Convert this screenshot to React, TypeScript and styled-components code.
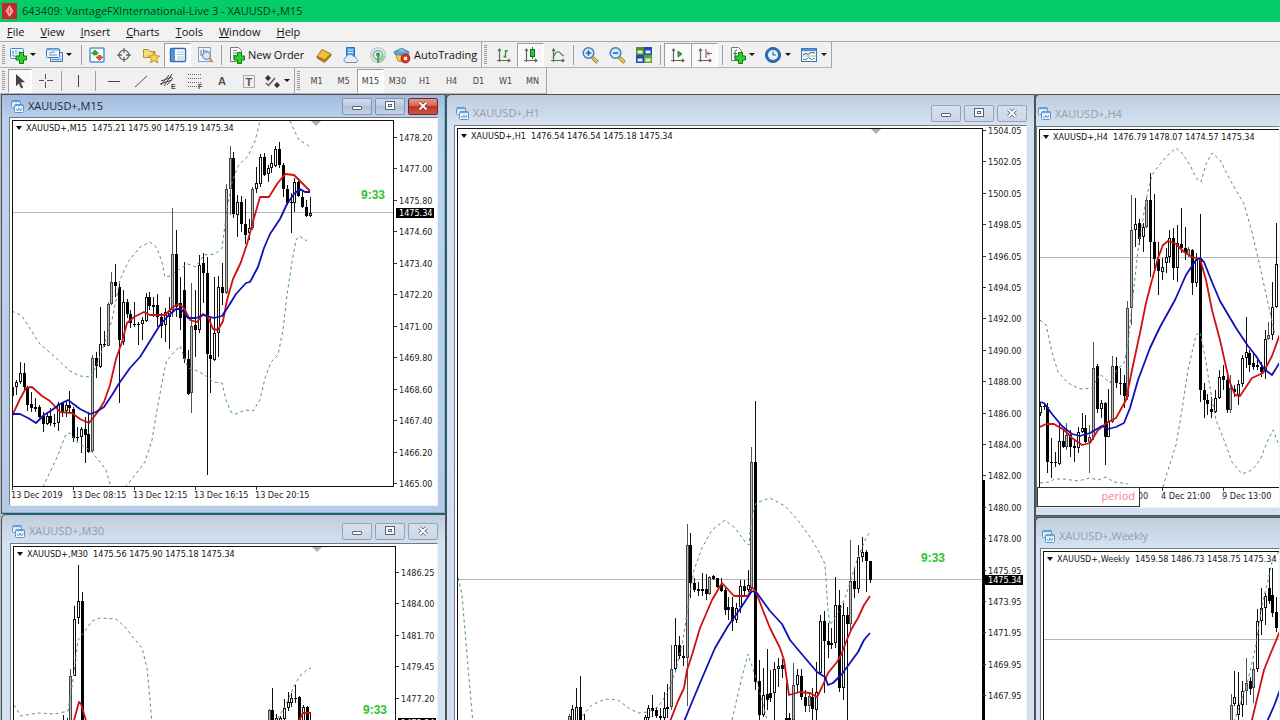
import React from "react";
import styled, { createGlobalStyle, css } from "styled-components";

const uiFont = `"Open Sans", "Noto Sans", sans-serif`;
const chartFont = `"DejaVu Sans Condensed", "DejaVu Sans", sans-serif`;

const GlobalStyle = createGlobalStyle`
  * { box-sizing: border-box; }
  html, body, #root { height: 100%; margin: 0; }
  body { background: #f0f0f0; color: #111; font: 11px/16px ${uiFont}; overflow: hidden; }
  button { font: inherit; color: inherit; border: 0; padding: 0; background: none; }
`;

/* ---------- application chrome ---------- */

const Shell = styled.div`
  display: flex;
  flex-direction: column;
  height: 100vh;
`;

const AppTitle = styled.header`
  display: flex;
  flex: none;
  align-items: center;
  gap: 5px;
  height: 22px;
  padding-left: 2px;
  background: #04cd67;
  color: #063a20;
  white-space: nowrap;
`;

const MenuBar = styled.nav`
  display: flex;
  flex: none;
  align-items: center;
  gap: 16px;
  height: 20px;
  padding-left: 7px;
  background: #f3f2f3;
  border-bottom: 1px solid #a9a9a9;
`;

const MenuItem = styled.button`
  line-height: 18px;
  &::first-letter { text-decoration: underline; }
`;

const ToolRow = styled.div`
  display: flex;
  flex: none;
  height: 26px;
  background: #f0f0f0;
`;

const ToolGroup = styled.div<{ $tight?: boolean }>`
  display: flex;
  align-items: center;
  height: 26px;
  padding-right: ${(p) => (p.$tight ? 0 : 4)}px;
  border-right: 1px solid #a5a5a5;
  border-bottom: 1px solid #b4b4b4;
`;

const Grip = styled.span`
  width: 3px;
  height: 20px;
  margin: 0 3px 0 2px;
  background: repeating-linear-gradient(#9a9a9a 0 1px, #f0f0f0 1px 2px);
`;

const Divider = styled.span<{ $gap?: number }>`
  width: 1px;
  height: 20px;
  margin: 0 ${(p) => p.$gap ?? 2}px;
  background: #a0a0a0;
`;

const buttonWidths = { icon: 27, slim: 24, split: 36, tail: 32, label: 85 };

const ToolButton = styled.button<{ $pressed?: boolean; $size?: keyof typeof buttonWidths }>`
  display: flex;
  align-items: center;
  justify-content: center;
  gap: 3px;
  height: 24px;
  min-width: ${(p) => buttonWidths[p.$size ?? "icon"]}px;
  white-space: nowrap;
  ${(p) =>
    (p.$size === "split" || p.$size === "tail") &&
    css`
      justify-content: flex-start;
      padding-left: 1px;
    `}
  ${(p) =>
    p.$size === "label" &&
    css`
      justify-content: flex-start;
      padding-left: 2px;
    `}
  ${(p) =>
    p.$pressed &&
    css`
      background: #f9f9f9;
      border: 1px solid;
      border-color: #9c9c9c #fff #fff #9c9c9c;
    `}
`;

const PeriodButton = styled(ToolButton)`
  font: 9px/12px ${chartFont};
  color: #444;
`;

const Caret = styled.span`
  border: 3px solid transparent;
  border-top-color: #111;
  border-bottom: 0;
`;

/* ---------- chart windows ---------- */

const Desktop = styled.main`
  display: grid;
  flex: 1;
  min-height: 0;
  grid-template-columns: minmax(446px, 34fr) minmax(589px, 46fr) minmax(0, 20fr);
  background: #6b6b6b;
  overflow: hidden;
`;

const Column = styled.div`
  display: flex;
  flex-direction: column;
  gap: 1px;
  min-width: 0;
  min-height: 0;
`;

const LeftColumn = styled(Column)`
  gap: 0;
  padding-left: 1px;
  background: #b9bcc0;
`;

const Frame = styled.section<{ $active?: boolean; $left: number; $fill?: boolean; $open?: boolean }>`
  display: flex;
  flex-direction: column;
  flex: ${(p) => (p.$fill ? "1 0 auto" : "none")};
  padding: 0 ${(p) => (p.$open ? 0 : 7)}px 7px ${(p) => p.$left}px;
  border: 1px solid #4b4f56;
  border-right-width: ${(p) => (p.$open ? 0 : 1)}px;
  border-radius: 5px 0 0 0;
  background: ${(p) =>
    p.$active
      ? "linear-gradient(#a3bbdc, #b9d0ee 24px, #bcd2ee 90px, #b7cbe6)"
      : "linear-gradient(#c0cddd, #d5e2f2 30px, #d4e0f1)"};
  ${(p) =>
    p.$active &&
    css`
      border-radius: 0;
      box-shadow: inset -1px -1px 0 #49cdec;
    `}
`;

const TitleBar = styled.header<{ $height: number; $drop: number; $active?: boolean }>`
  display: flex;
  flex: none;
  align-items: center;
  gap: 4px;
  height: ${(p) => p.$height}px;
  padding: ${(p) => p.$drop}px 0 0 2px;
  color: ${(p) => (p.$active ? "#1c2838" : "#939dab")};
`;

const WindowName = styled.h2`
  flex: 1;
  margin: 0;
  font-size: 11px;
  font-weight: 400;
`;

const Controls = styled.div`
  display: flex;
  gap: 3px;
`;

const ControlButton = styled.button<{ $danger?: boolean }>`
  display: flex;
  align-items: center;
  justify-content: center;
  width: 30px;
  height: 17px;
  border: 1px solid #8593ab;
  border-radius: 2px;
  background: linear-gradient(#d0dcec, #bccbe0 50%, #aec0da 50%, #c4d3e8);
  ${(p) =>
    p.$danger &&
    css`
      border-color: #6e2a26;
      background: linear-gradient(#e2998d, #d0604f 50%, #bd3524 50%, #cf5340);
    `}
`;

const IdleControl = styled(ControlButton)`
  background: linear-gradient(#d6e0ee, #cbd7e7);
  border-color: #95a2b8;
`;

const Client = styled.div`
  display: grid;
  flex: 1;
  grid-template-columns: minmax(0, 1fr) auto;
  grid-template-rows: auto 1fr;
  padding: 2px 0 0 2px;
  border: 1px solid #75787d;
  border-right-color: #eef3fa;
  border-bottom-color: #eef3fa;
  background: #fff;
`;

const Plot = styled.div<{ $height: number; $open?: boolean }>`
  position: relative;
  height: ${(p) => p.$height}px;
  border: 1px solid #111;
  border-right-width: ${(p) => (p.$open ? 0 : 1)}px;
  overflow: hidden;
`;

const PlotSvg = styled.svg`
  display: block;
  width: 100%;
  height: 100%;
`;

const Quote = styled.div`
  position: absolute;
  top: 1px;
  left: 3px;
  display: flex;
  align-items: center;
  gap: 4px;
  font: 9px/12px ${chartFont};
  white-space: pre;
`;

const QuoteCaret = styled(Caret)`
  border-top-width: 4px;
`;

const Countdown = styled.div<{ $top: number; $right: number }>`
  position: absolute;
  top: ${(p) => p.$top}px;
  right: ${(p) => p.$right}px;
  color: #2fc42f;
  font: 700 12px/16px "Liberation Sans", Arial, sans-serif;
`;

const Scale = styled.svg<{ $width: number }>`
  display: block;
  width: ${(p) => p.$width}px;
  overflow: visible;
  font: 9px ${chartFont};
`;

const TimeAxis = styled.svg<{ $height: number }>`
  display: block;
  grid-column: 1 / -1;
  width: 100%;
  height: ${(p) => p.$height}px;
  font: 9px ${chartFont};
`;

const TimeArea = styled.div`
  position: relative;
  grid-column: 1 / -1;
`;

const PeriodTag = styled.div`
  position: absolute;
  top: -1px;
  left: -2px;
  width: 103px;
  height: 20px;
  padding-right: 4px;
  border: 1px solid #333;
  background: #fff;
  color: #ee8494;
  font: 11px/16px ${uiFont};
  text-align: right;
`;

/* ---------- chart data: high, body top, body bottom, low, kind ---------- */

type Kind = 0 | 1 | 2; // falling, rising, rising over grey
type Candle = [number, number, number, number, Kind];
type Pt = [number, number];

interface Series {
  start: number;
  candles: Candle[];
}

interface ChartData {
  origin: Pt;
  level: number;
  marker?: number;
  series: Series[];
  bands: Pt[][];
  fast: Pt[][];
  slow: Pt[][];
}

const STEP = 61 / 16;

const m15: ChartData = {
  origin: [13, 121],
  level: 213,
  marker: 316,
  series: [
    {
      start: 12.7,
      candles: [
        [379, 387, 396, 396, 1], [380, 382, 387, 395, 1], [362, 373, 382, 384, 1], [363, 373, 387, 391, 0],
        [386, 388, 405, 411, 0], [392, 404, 408, 412, 0], [398, 407, 409, 412, 0], [405, 407, 417, 418, 0],
        [412, 416, 424, 432, 0], [412, 416, 424, 425, 1], [408, 416, 423, 426, 0], [414, 423, 424, 427, 0],
        [402, 404, 423, 431, 1], [402, 403, 413, 417, 0], [400, 405, 411, 417, 1], [391, 405, 408, 413, 0],
        [407, 409, 438, 442, 0], [427, 437, 438, 441, 0], [427, 429, 437, 453, 1], [417, 429, 435, 463, 0],
        [412, 434, 452, 453, 0], [355, 358, 451, 452, 2], [352, 358, 366, 378, 0], [307, 344, 367, 368, 1],
        [331, 344, 345, 347, 0], [302, 304, 346, 346, 2], [272, 282, 304, 305, 2], [264, 282, 286, 297, 0],
        [281, 287, 340, 403, 0], [290, 302, 342, 345, 1], [299, 302, 314, 318, 0], [310, 314, 323, 328, 0],
        [302, 324, 325, 327, 0], [322, 324, 325, 345, 0], [317, 320, 324, 340, 1], [293, 297, 321, 322, 1],
        [292, 297, 306, 310, 0], [297, 305, 307, 317, 0], [294, 305, 317, 327, 0], [313, 317, 326, 338, 0],
        [308, 312, 325, 342, 1], [297, 311, 317, 349, 1], [208, 254, 310, 317, 2], [230, 254, 307, 317, 0],
        [277, 303, 318, 330, 0], [262, 290, 359, 363, 0], [350, 359, 394, 395, 0], [283, 326, 393, 413, 2],
        [290, 325, 330, 357, 0], [255, 265, 330, 333, 1], [253, 263, 273, 303, 0], [257, 273, 354, 475, 0],
        [317, 355, 359, 393, 0], [277, 333, 360, 361, 1], [276, 287, 333, 357, 1], [263, 287, 293, 305, 0],
        [184, 189, 293, 294, 2], [146, 158, 189, 215, 2], [152, 158, 214, 218, 0], [195, 202, 215, 237, 1],
        [196, 202, 224, 232, 0], [199, 224, 235, 244, 0], [219, 228, 233, 240, 1], [187, 189, 228, 230, 2],
        [167, 183, 189, 193, 1], [154, 157, 184, 187, 1], [153, 157, 175, 176, 0], [165, 168, 174, 182, 1],
        [155, 163, 168, 173, 1], [146, 149, 166, 167, 1], [142, 149, 165, 168, 0], [163, 165, 189, 197, 0],
        [185, 189, 203, 205, 0], [193, 202, 203, 233, 0], [178, 182, 203, 212, 1], [178, 182, 196, 197, 0],
        [190, 197, 207, 208, 0], [200, 207, 216, 217, 0], [197, 213, 216, 217, 1],
      ],
    },
  ],
  bands: [
    [[12, 311], [22, 316], [40, 344], [55, 357], [70, 371], [80, 376], [90, 377], [96, 367], [104, 345], [112, 320], [120, 280], [128, 262], [140, 247], [150, 242], [157, 248], [162, 262], [165, 277], [170, 276], [178, 270], [188, 264], [196, 267], [204, 255], [215, 254], [222, 248], [227, 210], [232, 182], [238, 166], [248, 156], [255, 141], [260, 121]],
    [[290, 121], [294, 130], [299, 140], [304, 143], [309, 146]],
    [[43, 487], [50, 472], [58, 455], [66, 434], [70, 433], [78, 443], [90, 450], [100, 462], [106, 470], [111, 487]],
    [[125, 487], [135, 475], [145, 462], [152, 440], [157, 410], [164, 372], [167, 360], [180, 346], [188, 368], [195, 370], [205, 375], [213, 382], [222, 383], [226, 400], [231, 412], [236, 414], [245, 410], [253, 411], [260, 400], [265, 378], [271, 362], [278, 355], [283, 330], [287, 295], [292, 262], [296, 240], [299, 236], [307, 241]],
  ],
  fast: [
    [[12, 416], [20, 399], [26, 388], [32, 387], [42, 396], [50, 401], [60, 412], [72, 413], [80, 419], [89, 423], [97, 413], [104, 402], [110, 385], [116, 359], [122, 342], [127, 323], [134, 317], [144, 312], [150, 315], [165, 315], [172, 308], [178, 304], [184, 308], [190, 320], [197, 322], [203, 314], [208, 317], [213, 329], [218, 330], [223, 321], [227, 300], [233, 279], [241, 262], [247, 244], [254, 218], [260, 197], [269, 197], [277, 184], [285, 174], [294, 175], [302, 183], [310, 191]],
  ],
  slow: [
    [[12, 414], [20, 414], [28, 418], [36, 423], [44, 415], [52, 410], [60, 404], [68, 400], [80, 409], [90, 414], [96, 412], [104, 407], [112, 395], [120, 382], [130, 368], [140, 357], [150, 341], [160, 325], [168, 316], [176, 309], [181, 309], [188, 318], [196, 318], [203, 315], [214, 318], [222, 316], [228, 307], [236, 294], [246, 283], [250, 282], [258, 267], [264, 248], [270, 234], [280, 219], [287, 204], [294, 194], [300, 189], [305, 192], [310, 192]],
  ],
};

const m30: ChartData = {
  origin: [14, 547],
  level: 723,
  marker: 317,
  series: [
    {
      start: 63.2,
      candles: [
        [715, 724, 730, 740, 0], [718, 724, 730, 740, 0], [669, 676, 740, 740, 2], [606, 619, 676, 676, 1],
        [565, 601, 618, 624, 1], [592, 601, 740, 740, 0],
      ],
    },
    {
      start: 269,
      candles: [
        [709, 710, 740, 740, 2], [688, 710, 740, 740, 0], [714, 718, 730, 740, 1], [716, 718, 740, 740, 1],
        [699, 708, 719, 722, 1], [692, 702, 708, 711, 1], [693, 698, 703, 707, 1], [685, 698, 699, 703, 0],
        [696, 697, 740, 740, 0], [705, 707, 725, 730, 1], [706, 707, 730, 730, 0], [714, 720, 730, 730, 1],
      ],
    },
  ],
  bands: [
    [[14, 705], [21, 716], [38, 713], [55, 714], [68, 711], [73, 680], [78, 640], [84, 632], [92, 621], [100, 618], [116, 619], [125, 627], [132, 636], [142, 648], [147, 668], [150, 700], [152, 724]],
    [[275, 724], [288, 700], [294, 686], [300, 676], [308, 669], [311, 668]],
  ],
  fast: [[[73, 724], [79, 702], [81, 704], [87, 724]], [[297, 724], [303, 713], [311, 713]]],
  slow: [],
};

const h1: ChartData = {
  origin: [458, 129],
  level: 580,
  marker: 876,
  series: [
    { start: 569, candles: [[714, 716, 740, 740, 2], [705, 709, 740, 740, 1], [688, 707, 740, 740, 1], [676, 707, 740, 740, 0], [714, 722, 740, 740, 0]] },
    {
      start: 645.1,
      candles: [
        [715, 717, 722, 722, 1], [705, 708, 718, 720, 1], [695, 708, 711, 717, 0], [707, 710, 716, 718, 0],
        [708, 716, 718, 720, 0], [692, 708, 718, 722, 1], [684, 707, 709, 718, 0], [645, 669, 707, 710, 2],
        [618, 645, 669, 670, 1], [636, 645, 656, 659, 0], [645, 656, 658, 666, 0], [524, 545, 658, 706, 2],
        [533, 545, 583, 598, 0], [578, 583, 590, 592, 0], [582, 589, 591, 596, 0], [573, 589, 591, 596, 0],
        [574, 589, 594, 600, 0], [576, 577, 594, 595, 2], [575, 576, 579, 580, 0], [578, 578, 587, 588, 0],
        [578, 585, 591, 592, 0], [587, 590, 610, 615, 0], [597, 607, 610, 620, 0], [597, 607, 621, 631, 0],
        [603, 608, 620, 623, 1], [580, 586, 607, 613, 1], [580, 586, 591, 595, 0], [570, 585, 590, 592, 1],
        [447, 462, 588, 590, 2], [401, 462, 682, 690, 0], [660, 681, 715, 720, 0], [668, 695, 715, 717, 1],
        [649, 694, 700, 710, 0], [670, 693, 698, 702, 0], [662, 669, 693, 720, 1], [658, 666, 669, 687, 1],
        [659, 665, 669, 678, 0], [683, 718, 724, 724, 0], [713, 718, 724, 724, 0], [663, 685, 720, 724, 2],
        [669, 675, 685, 692, 1], [669, 676, 697, 700, 0], [690, 697, 706, 712, 0], [692, 696, 706, 712, 2],
        [688, 697, 709, 724, 0], [662, 692, 710, 724, 1], [615, 621, 673, 674, 1], [611, 621, 641, 693, 0],
        [623, 641, 645, 658, 0], [628, 643, 645, 649, 0], [577, 605, 643, 648, 1], [590, 605, 688, 692, 0],
        [603, 615, 688, 700, 1], [607, 615, 624, 724, 0], [540, 581, 624, 630, 2], [568, 581, 589, 598, 0],
        [545, 557, 589, 593, 1], [537, 552, 557, 562, 1], [550, 552, 561, 592, 0], [561, 561, 580, 583, 0],
      ],
    },
  ],
  bands: [
    [[457, 572], [462, 595], [467, 655], [473, 724]],
    [[582, 716], [592, 705], [605, 699], [618, 700], [630, 709], [638, 713], [648, 712], [658, 707], [668, 692], [676, 670], [683, 640], [689, 600], [694, 570], [702, 548], [712, 530], [725, 520], [735, 528], [746, 543], [749, 545], [751, 520], [756, 503], [770, 498], [785, 506], [797, 519], [808, 534], [818, 550], [825, 564], [828, 610], [830, 625], [840, 610], [847, 592], [857, 560], [866, 538], [870, 532]],
    [[732, 720], [740, 685], [748, 654], [755, 675], [762, 700], [768, 724]],
  ],
  fast: [
    [[669, 724], [678, 701], [684, 688], [687, 670], [692, 655], [700, 628], [712, 600], [722, 583], [734, 596], [748, 596], [752, 587], [756, 592], [762, 608], [770, 628], [780, 648], [784, 660], [789, 695], [800, 692], [810, 693], [817, 697], [822, 687], [828, 673], [837, 662], [841, 655], [846, 642], [852, 628], [858, 618], [864, 605], [870, 596]],
  ],
  slow: [
    [[683, 724], [690, 707], [700, 683], [715, 648], [728, 626], [738, 612], [748, 597], [752, 591], [757, 593], [770, 611], [782, 624], [790, 640], [800, 652], [817, 672], [825, 677], [828, 685], [833, 683], [842, 674], [850, 663], [858, 652], [864, 640], [870, 633]],
  ],
};

const h4: ChartData = {
  origin: [1040, 130],
  level: 258,
  series: [
    {
      start: 1040.2,
      candles: [
        [403, 406, 413, 416, 1], [404, 406, 407, 410, 0], [403, 407, 462, 473, 0], [438, 462, 463, 478, 0],
        [452, 462, 463, 467, 0], [423, 441, 464, 465, 1], [430, 441, 447, 448, 0], [423, 435, 447, 450, 2],
        [430, 435, 447, 457, 0], [440, 446, 448, 462, 0], [427, 432, 448, 453, 1], [413, 428, 432, 433, 1],
        [415, 428, 442, 443, 0], [425, 437, 442, 473, 2], [342, 368, 437, 440, 2], [364, 366, 409, 413, 0],
        [400, 403, 409, 418, 1], [402, 403, 437, 465, 0], [389, 422, 437, 437, 1], [356, 366, 422, 423, 2],
        [357, 366, 383, 388, 0], [368, 383, 384, 395, 0], [375, 383, 396, 408, 0], [301, 308, 397, 400, 2],
        [195, 230, 308, 325, 2], [198, 224, 230, 247, 1], [219, 223, 239, 245, 0], [223, 227, 237, 252, 1],
        [197, 200, 227, 228, 2], [173, 200, 242, 277, 0], [194, 242, 259, 270, 0], [242, 259, 271, 295, 0],
        [258, 267, 272, 280, 1], [248, 257, 263, 273, 1], [230, 238, 257, 263, 1], [228, 238, 268, 280, 0],
        [225, 243, 268, 282, 1], [208, 244, 248, 253, 0], [227, 248, 253, 260, 0], [247, 249, 255, 257, 2],
        [249, 250, 283, 295, 0], [253, 260, 283, 287, 1], [214, 258, 390, 402, 0], [383, 390, 400, 418, 0],
        [394, 400, 404, 415, 0], [397, 409, 412, 418, 0], [390, 398, 412, 413, 1], [370, 377, 398, 399, 1],
        [365, 376, 380, 390, 0], [375, 380, 410, 413, 0], [375, 388, 410, 413, 2], [385, 389, 392, 397, 0],
        [380, 384, 395, 405, 1], [355, 358, 384, 387, 1], [317, 352, 358, 368, 1], [350, 353, 365, 372, 0],
        [352, 363, 367, 370, 0], [360, 365, 367, 370, 0], [362, 367, 372, 377, 0], [330, 339, 372, 379, 1],
        [322, 335, 339, 340, 2], [282, 307, 335, 340, 1], [223, 264, 307, 308, 1], [240, 255, 264, 270, 0],
      ],
    },
  ],
  bands: [
    [[1040, 320], [1046, 325], [1052, 352], [1058, 372], [1068, 383], [1080, 389], [1092, 388], [1100, 374], [1110, 383], [1116, 371], [1124, 363], [1128, 345], [1132, 305], [1138, 250], [1146, 200], [1152, 175], [1160, 164], [1168, 155], [1176, 148], [1182, 153], [1190, 165], [1196, 178], [1201, 182], [1206, 164], [1212, 153], [1220, 160], [1230, 180], [1236, 190], [1244, 204], [1252, 232], [1258, 258], [1264, 285], [1270, 312], [1275, 335]],
    [[1040, 483], [1050, 482], [1054, 479], [1064, 479], [1078, 481], [1090, 478], [1098, 480], [1106, 477], [1114, 482], [1122, 483], [1128, 484]],
    [[1163, 487], [1168, 470], [1176, 445], [1182, 410], [1188, 370], [1196, 335], [1200, 332], [1206, 362], [1212, 400], [1216, 420], [1224, 440], [1232, 462], [1242, 474], [1252, 470], [1260, 460], [1268, 440], [1273, 430], [1280, 448]],
  ],
  fast: [
    [[1040, 427], [1046, 424], [1054, 424], [1064, 430], [1072, 438], [1082, 445], [1090, 443], [1098, 430], [1108, 422], [1116, 418], [1126, 400], [1132, 370], [1140, 333], [1146, 303], [1152, 280], [1158, 258], [1163, 245], [1168, 241], [1176, 244], [1184, 252], [1192, 257], [1200, 259], [1206, 280], [1212, 310], [1220, 340], [1229, 380], [1235, 395], [1240, 396], [1252, 378], [1263, 373], [1272, 356], [1280, 334]],
  ],
  slow: [
    [[1040, 402], [1044, 403], [1052, 414], [1062, 426], [1072, 434], [1080, 436], [1090, 433], [1102, 426], [1108, 429], [1116, 427], [1124, 423], [1130, 408], [1138, 380], [1150, 348], [1160, 327], [1175, 300], [1186, 275], [1196, 260], [1200, 258], [1204, 262], [1212, 282], [1220, 301], [1236, 328], [1248, 346], [1256, 356], [1264, 369], [1272, 375], [1280, 362]],
  ],
};

const weekly: ChartData = {
  origin: [1044, 552],
  level: 640,
  series: [
    {
      start: 1231,
      candles: [
        [694, 705, 740, 740, 2], [671, 697, 704, 706, 1], [672, 705, 715, 724, 1], [681, 691, 705, 717, 1],
        [658, 683, 691, 705, 2], [677, 681, 689, 695, 0], [662, 669, 688, 703, 2], [609, 621, 669, 672, 1],
        [588, 608, 621, 635, 1], [593, 596, 608, 625, 1], [568, 588, 601, 604, 0], [568, 595, 613, 617, 0],
        [597, 612, 628, 632, 0], [600, 604, 612, 630, 0],
      ],
    },
  ],
  bands: [[[1234, 722], [1248, 680], [1256, 645], [1262, 605], [1268, 580], [1272, 562], [1280, 550]]],
  fast: [[[1251, 724], [1258, 695], [1264, 670], [1270, 655], [1280, 631]]],
  slow: [[[1266, 724], [1274, 706], [1280, 690]]],
};

const kindFill = ["#000", "#fff", "#bdbdbd"];

function CandleMark({ x, candle }: { x: number; candle: Candle }) {
  const [high, top, bottom, low, kind] = candle;
  const cx = Math.round(x);
  const bodyHeight = Math.max(1, bottom - top);
  return (
    <g>
      <rect x={cx} y={high} width={1} height={Math.max(1, low - high)} fill={kind === 2 ? "#555" : "#111"} />
      {kind === 0 || bodyHeight < 3 ? (
        <rect x={cx - 1} y={top} width={3} height={bodyHeight} fill="#000" />
      ) : (
        <rect x={cx - 0.5} y={top + 0.5} width={2} height={bodyHeight - 1} fill={kindFill[kind]} stroke={kind === 2 ? "#444" : "#111"} />
      )}
    </g>
  );
}

const toPoints = (line: Pt[]) => line.map((p) => p.join(",")).join(" ");

function PlotDrawing({ data }: { data: ChartData }) {
  const [ox, oy] = data.origin;
  const levelY = data.level - oy;
  return (
    <PlotSvg aria-hidden="true">
      <line x1="0" x2="100%" y1={levelY - 0.5} y2={levelY - 0.5} stroke="#b8b8b8" />
      <g transform={`translate(${-ox} ${-oy})`}>
        {data.marker && <path d={`M${data.marker - 5} ${oy}h10l-5 5z`} fill="#b0b0b0" />}
        {data.series.map((s) => s.candles.map((c, i) => <CandleMark key={`${s.start}-${i}`} x={s.start - 0.5 + i * STEP} candle={c} />))}
        <g fill="none" strokeLinejoin="round">
          {data.bands.map((b, i) => (
            <polyline key={i} points={toPoints(b)} stroke="#4f9580" strokeDasharray="3 3" />
          ))}
          {data.fast.map((b, i) => (
            <polyline key={i} points={toPoints(b)} stroke="#cf1010" strokeWidth="1.8" />
          ))}
          {data.slow.map((b, i) => (
            <polyline key={i} points={toPoints(b)} stroke="#1010b8" strokeWidth="1.8" />
          ))}
        </g>
      </g>
    </PlotSvg>
  );
}

interface ScaleProps {
  labels: string[];
  first: number;
  gap: number;
  current: number;
  heavyFrom?: number;
  width?: number;
}

function PriceScale({ labels, first, gap, current, heavyFrom, width = 43 }: ScaleProps) {
  return (
    <Scale height="100%" $width={width}>
      {heavyFrom && <rect x="-1" y={heavyFrom} width="3" height="100%" fill="#000" />}
      {labels.map((label, i) => {
        const y = Math.round(first + i * gap);
        return (
          <g key={label}>
            <rect x="0" y={y} width="3" height="1" fill="#333" />
            <text x="5" y={y + 4} fill="#222">{label}</text>
          </g>
        );
      })}
      <rect x="2" y={current - 5} width="38" height="10" fill="#000" />
      <text x="5" y={current + 3} fill="#fff">1475.34</text>
    </Scale>
  );
}

function TimeLabels({ height, marks }: { height: number; marks: [number, string][] }) {
  return (
    <TimeAxis $height={height}>
      {marks.map(([x, label]) => (
        <g key={label}>
          <rect x={x} y="0" width="1" height="3" fill="#333" />
          <text x={x - 1} y="11" fill="#222">{label}</text>
        </g>
      ))}
    </TimeAxis>
  );
}

/* ---------- icons ---------- */

const Icon = ({ children, w = 18 }: { children: React.ReactNode; w?: number }) => (
  <svg width={w} height="18" viewBox={`0 0 ${w} 18`} fill="none" aria-hidden="true">
    {children}
  </svg>
);

const Plus = () => <path d="M10.500 6.500h4v3.500h3v4h-3v3.500h-4V14H7v-4h3.500z" fill="#2fd02f" stroke="#0b7d12" />;

const NewChartIcon = () => (
  <Icon>
    <rect x="1.500" y="2.500" width="13" height="10" rx="1" fill="#eef5fd" stroke="#4a84bd" />
    <path d="M4 5v5M3 6h2M7 4v4M10 5v3M4 10h5" stroke="#6d9bc8" />
    <Plus />
  </Icon>
);
const ProfilesIcon = () => (
  <Icon>
    <path d="M5.500 6.500h12v9h-12z" fill="#cfe2f6" stroke="#3f78b3" />
    <rect x="1.500" y="2.500" width="13" height="9" rx="1" fill="#f3f8fd" stroke="#3f78b3" />
    <path d="M2 3.500h12" stroke="#7fb0e0" strokeWidth="2" />
    <path d="M4 7h2l1-1h3M4 9h8M7 13.500h9" stroke="#5e92c6" />
  </Icon>
);
const MarketWatchIcon = () => (
  <Icon>
    <rect x="2" y="2" width="14" height="14" rx="1" fill="#f8fbff" stroke="#4c98cf" strokeWidth="1.500" />
    <path d="M7 4l3.500 3.500H8.500V9h-3V7.500H3.500z" fill="#28b428" stroke="#13761a" strokeWidth=".6" />
    <path d="M11.500 14.500L8 11h2V9.500h3V11h2z" fill="#ee5a20" stroke="#a3320a" strokeWidth=".6" />
  </Icon>
);
const DataWindowIcon = () => (
  <Icon>
    <circle cx="9" cy="9" r="4.800" stroke="#666" strokeWidth="1.300" />
    <path d="M9 2v5M9 11v5M2 9h5M11 9h5" stroke="#666" strokeWidth="1.300" />
  </Icon>
);
const NavigatorIcon = () => (
  <Icon>
    <path d="M1.500 3.500h5l1.500 2h5v6h-11.500z" fill="#f7dc79" stroke="#b98d1e" />
    <path d="M12 6l1.700 3.700 4 .4-3 2.700.9 4-3.600-2.100L8.500 16.800l.9-4-3-2.700 4-.4z" fill="#fbd44a" stroke="#b07f10" strokeWidth=".8" />
  </Icon>
);
const TerminalIcon = () => (
  <Icon>
    <rect x="1.500" y="2.500" width="15" height="13" rx="1" fill="#fff" stroke="#2c6cb4" strokeWidth="1.400" />
    <path d="M2 3h4v12H2z" fill="#4f93d8" />
    <path d="M8 6h7M8 8.500h7M8 11h7M8 13h7" stroke="#a9c3dd" />
  </Icon>
);
const TesterIcon = () => (
  <Icon>
    <rect x="2.500" y="1.500" width="12" height="14" fill="#edf3fa" stroke="#7f9fbe" />
    <path d="M5 4v6M7.500 3v6M10 4v3" stroke="#5d7fa2" />
    <circle cx="10.500" cy="9.500" r="3.900" fill="#cfe4f7" fillOpacity=".8" stroke="#6a93b8" strokeWidth="1.200" />
    <path d="M13.200 12.200l3.600 4" stroke="#c8962a" strokeWidth="2" />
  </Icon>
);
const NewOrderIcon = () => (
  <Icon>
    <path d="M3.500 1.500h8l3 3v11h-11z" fill="#fafafa" stroke="#777" />
    <path d="M6 4.500h4M6 7h6M6 9.500h4M6 12h3" stroke="#888" />
    <Plus />
  </Icon>
);
const EditorIcon = () => (
  <Icon>
    <path d="M2 10.500l5-7 9 4.500-6.500 6z" fill="#f2bf3c" stroke="#a6721b" />
    <path d="M2 10.500v1.500l7.500 4.500 6.500-6.500v-2L9.500 14z" fill="#c98a1f" stroke="#8d5d10" strokeWidth=".8" />
  </Icon>
);
const CloudIcon = () => (
  <Icon>
    <path d="M4.500 1.500h8v9h-8z" fill="#4ba3ea" stroke="#2272bd" />
    <path d="M6 4h5M6 6.500h5" stroke="#e3f2ff" />
    <path d="M4 16.500a2.800 2.800 0 010-5.400 4 4 0 017-1 3.200 3.200 0 013.500 3 1.900 1.900 0 01-.2 3.400z" fill="#e6eef8" stroke="#7090b6" />
  </Icon>
);
const SignalIcon = () => (
  <Icon>
    <circle cx="9" cy="9" r="7.300" stroke="#c0cdd0" strokeWidth="1.500" />
    <circle cx="9" cy="9" r="4.600" stroke="#85a9a0" strokeWidth="1.500" />
    <path d="M9 9v8c4-.5 6.500-3 7-7" fill="#7ec87e" fillOpacity=".6" />
    <circle cx="9" cy="8.500" r="2" fill="#2f9a4a" />
    <path d="M9 9v8" stroke="#49a860" strokeWidth="2" />
  </Icon>
);
const AutoTradingIcon = () => (
  <Icon>
    <path d="M2 7l3 8 8 1 3-8z" fill="#f5cf4c" stroke="#b48d1c" />
    <ellipse cx="8.500" cy="6.500" rx="7.500" ry="2.600" fill="#62a6dc" stroke="#326f9f" strokeWidth=".8" />
    <path d="M4.500 5.500a4.300 4.300 0 018.200 0" fill="#8ec5ee" stroke="#326f9f" strokeWidth=".8" />
    <circle cx="12.500" cy="12.500" r="4.500" fill="#dd2b17" stroke="#9d1508" strokeWidth=".6" />
    <rect x="10.800" y="10.800" width="3.400" height="3.400" fill="#fff" />
  </Icon>
);
const Axes = () => <path d="M4.500 3v13M2 14.500h13M3 5l1.500-2L6 5M13 13l2 1.500-2 1.500" stroke="#666" strokeWidth="1.200" />;
const BarChartIcon = () => (
  <Icon><Axes /><path d="M10.500 4v8M8.500 10.500h2M10.500 5h2.500" stroke="#2c9a3a" strokeWidth="1.400" /></Icon>
);
const CandleChartIcon = () => (
  <Icon><Axes /><path d="M10.500 1v12" stroke="#16731f" /><rect x="8.500" y="3.500" width="4" height="7" fill="#22cc33" stroke="#16731f" /></Icon>
);
const LineChartIcon = () => (
  <Icon><Axes /><path d="M4 12c2-5 4-7 6-6s2 3 5 4" stroke="#2c9a3a" strokeWidth="1.200" /></Icon>
);
const ZoomIcon = ({ plus }: { plus?: boolean }) => (
  <Icon>
    <path d="M11.500 11.500l5 5" stroke="#8e6a14" strokeWidth="3.600" />
    <path d="M11.800 11.800l4.500 4.500" stroke="#f0cf58" strokeWidth="2" />
    <circle cx="7.500" cy="7" r="5.300" fill="#d9ecfb" stroke="#3d7fbd" strokeWidth="1.500" />
    <path d={plus ? "M4.800 7h5.400M7.500 4.300v5.400" : "M4.800 7h5.400"} stroke="#2569a8" strokeWidth="1.600" />
  </Icon>
);
const TileIcon = () => (
  <Icon>
    <path d="M1 1h8v8H1z" fill="#4c9a1c" />
    <path d="M9 9h8v8H9z" fill="#5aae24" />
    <path d="M9 1h8v8H9zM1 9h8v8H1z" fill="#2449b4" />
    <path d="M2.500 4.500h5v3h-5zM10.500 4.500h5v3h-5zM2.500 12.500h5v3h-5zM10.500 12.500h5v3h-5z" fill="#dfeafa" />
  </Icon>
);
const AutoScrollIcon = () => <Icon><Axes /><path d="M9 5l4 3-4 3z" fill="#2fb23c" stroke="#16731f" strokeWidth=".8" /></Icon>;
const ShiftIcon = () => <Icon><Axes /><path d="M16 7.500h-5M13 5.500L11 7.500l2 2" stroke="#b8452c" /><path d="M10 3v9" stroke="#555" /></Icon>;
const IndicatorIcon = () => (
  <Icon>
    <path d="M3.500 1.500h7l3 3v10h-10z" fill="#fafafa" stroke="#777" />
    <path d="M9 4c-2 0-2 1-2 3v5M5.500 7.500h3.500" stroke="#555" />
    <Plus />
  </Icon>
);
const ClockIcon = () => (
  <Icon>
    <circle cx="9" cy="9" r="7.600" fill="#2a6fbe" stroke="#174d8d" strokeWidth=".8" />
    <circle cx="9" cy="9" r="5" fill="#eaf4fd" />
    <path d="M9 5.500V9h3" stroke="#3a5b80" strokeWidth="1.200" />
  </Icon>
);
const TemplateIcon = () => (
  <Icon>
    <rect x="1.500" y="2.500" width="15" height="13" fill="#fff" stroke="#3b78b6" />
    <path d="M2 4h14" stroke="#4b93d8" strokeWidth="2.500" />
    <path d="M3 8.500l3-1 2 1 3-2 4 .5" stroke="#555" />
    <path d="M2 10h14" stroke="#9bb9d6" />
    <path d="M3 13l3 .5 2.500-2 3 2 3-1.500" stroke="#2f8f3c" />
  </Icon>
);
const CursorIcon = () => <Icon><path d="M5 2l9 8.200-4.300.4 2.500 4.900-2 1-2.400-5L5 14.200z" fill="#444" /></Icon>;
const CrossIcon = () => <Icon><path d="M8.500 2v5M8.500 10v6M2 8.500h5M10 8.500h6" stroke="#555" /></Icon>;
const VLineIcon = () => <Icon><path d="M9.500 3v12" stroke="#444" /></Icon>;
const HLineIcon = () => <Icon><path d="M3 9.500h12" stroke="#444" /></Icon>;
const TrendIcon = () => <Icon><path d="M3 15L15 4" stroke="#555" /></Icon>;
const iconText = { fontFamily: "Liberation Sans", fontWeight: 700 };
const ChannelIcon = () => (
  <Icon>
    <path d="M2 13L10 3M5 14L13 2M8 13l6-7M2 9l11-4M1 12l12-4" stroke="#444" />
    <text x="12" y="17" fontSize="7" fill="#444" {...iconText}>E</text>
  </Icon>
);
const FiboIcon = () => (
  <Icon>
    <path d="M2 2.500h14M2 6.500h14M2 10.500h14M2 14.500h9" stroke="#666" strokeDasharray="1 1" />
    <text x="12" y="17" fontSize="7" fill="#444" {...iconText}>F</text>
  </Icon>
);
const TextIcon = () => <Icon><text x="5" y="13" fontSize="11" fill="#555" {...iconText}>A</text></Icon>;
const LabelIcon = () => (
  <Icon>
    <rect x="3.500" y="3.500" width="11" height="12" stroke="#666" strokeDasharray="1 1" />
    <text x="5.500" y="14" fontSize="11" fill="#555" {...iconText}>T</text>
  </Icon>
);
const ArrowsIcon = () => (
  <Icon>
    <path d="M2 6l3-3 3 3-3 3zM11 13l3-3 3 3-3 3z" fill="#333" />
    <path d="M3 11l2.500 2.500L12 6" stroke="#555" strokeWidth="1.300" />
  </Icon>
);
const WindowIcon = () => (
  <svg width="13" height="13" viewBox="0 0 13 13" fill="none" aria-hidden="true">
    <rect x=".5" y=".5" width="9" height="7" rx="1" fill="#eaf3fc" stroke="#5b93cc" />
    <path d="M1 1.500h8" stroke="#6fa6dc" strokeWidth="1.500" />
    <rect x="3.500" y="4.500" width="9" height="8" rx="1" fill="#f5faff" stroke="#5b93cc" />
    <path d="M4 5.500h8" stroke="#6fa6dc" strokeWidth="1.500" />
    <path d="M5 9l1.500 2L8 8l1.500 3L11 8" stroke="#5b93cc" />
  </svg>
);
const AppIcon = () => (
  <svg width="15" height="16" viewBox="0 0 15 16" aria-hidden="true">
    <rect width="15" height="16" fill="#c9262b" />
    <path d="M7.500 2l4 6-4 6-4-6z" fill="#f4b3a6" />
    <path d="M7.500 5v6M5 8h5" stroke="#d9564d" />
  </svg>
);
const glyphProps = { width: 12, height: 10, viewBox: "0 0 12 10", "aria-hidden": true } as const;
const MinGlyph = ({ c }: { c: string }) => <svg {...glyphProps}><rect x="1.500" y="5.500" width="9" height="3" rx=".5" fill="#fff" stroke={c} /></svg>;
const MaxGlyph = ({ c }: { c: string }) => (
  <svg {...glyphProps}><rect x="1.500" y=".5" width="9" height="8" fill="#fff" stroke={c} /><rect x="4.500" y="3.500" width="3" height="2" fill="#fff" stroke={c} /></svg>
);
const CloseGlyph = ({ c }: { c: string }) => (
  <svg {...glyphProps}><path d="M2.500 1.500l7 7M9.500 1.500l-7 7" stroke={c} strokeWidth="3.600" /><path d="M2.500 1.500l7 7M9.500 1.500l-7 7" stroke="#fff" strokeWidth="2" /></svg>
);

/* ---------- composition ---------- */

interface ChartWindowProps {
  symbol: string;
  prices: string;
  data: ChartData;
  plotHeight: number;
  titleHeight: number;
  drop: number;
  left?: number;
  active?: boolean;
  fill?: boolean;
  open?: boolean;
  countdown?: { top: number; right: number };
  scale?: ScaleProps;
  children?: React.ReactNode;
}

function ChartWindow(p: ChartWindowProps) {
  const Control = p.active ? ControlButton : IdleControl;
  const ink = "#57647a";
  return (
    <Frame $active={p.active} $left={p.left ?? 7} $fill={p.fill} $open={p.open}>
      <TitleBar $height={p.titleHeight} $drop={p.drop} $active={p.active}>
        <WindowIcon />
        <WindowName>{p.symbol}</WindowName>
        {!p.open && (
          <Controls>
            <Control aria-label="Minimize"><MinGlyph c={ink} /></Control>
            <Control aria-label="Maximize"><MaxGlyph c={ink} /></Control>
            <Control aria-label="Close" $danger={p.active}><CloseGlyph c={p.active ? "#7c2a20" : ink} /></Control>
          </Controls>
        )}
      </TitleBar>
      <Client>
        <Plot $height={p.plotHeight} $open={p.open}>
          <PlotDrawing data={p.data} />
          <Quote><QuoteCaret />{`${p.symbol}  ${p.prices}`}</Quote>
          {p.countdown && <Countdown $top={p.countdown.top} $right={p.countdown.right}>9:33</Countdown>}
        </Plot>
        {p.scale && <PriceScale {...p.scale} />}
        {p.children}
      </Client>
    </Frame>
  );
}

const menus = ["File", "View", "Insert", "Charts", "Tools", "Window", "Help"];
const periods = ["M1", "M5", "M15", "M30", "H1", "H4", "D1", "W1", "MN"];

const m15Prices = ["1478.20", "1477.00", "1475.80", "1474.60", "1473.40", "1472.20", "1471.00", "1469.80", "1468.60", "1467.40", "1466.20", "1465.00"];
const m30Prices = ["1486.25", "1484.00", "1481.70", "1479.45", "1477.20"];
const h1Prices = ["1504.05", "1502.05", "1500.05", "1498.05", "1496.05", "1494.05", "1492.00", "1490.00", "1488.00", "1486.00", "1484.00", "1482.00", "1480.00", "1478.00", "1475.95", "1473.95", "1471.95", "1469.95", "1467.95"];

export default function App() {
  return (
    <Shell>
      <GlobalStyle />
      <AppTitle><AppIcon />643409: VantageFXInternational-Live 3 - XAUUSD+,M15</AppTitle>
      <MenuBar>{menus.map((m) => <MenuItem key={m}>{m}</MenuItem>)}</MenuBar>
      <ToolRow>
        <ToolGroup>
          <Grip />
          <ToolButton $size="split" aria-label="New chart"><NewChartIcon /><Caret /></ToolButton>
          <ToolButton $size="split" aria-label="Profiles"><ProfilesIcon /><Caret /></ToolButton>
          <Divider $gap={1} />
          <ToolButton aria-label="Market watch"><MarketWatchIcon /></ToolButton>
          <ToolButton aria-label="Data window"><DataWindowIcon /></ToolButton>
          <ToolButton aria-label="Navigator"><NavigatorIcon /></ToolButton>
          <ToolButton aria-label="Terminal" $pressed><TerminalIcon /></ToolButton>
          <ToolButton aria-label="Strategy tester"><TesterIcon /></ToolButton>
          <Divider $gap={3} />
          <ToolButton $size="label"><NewOrderIcon />New Order</ToolButton>
          <ToolButton aria-label="MetaEditor"><EditorIcon /></ToolButton>
          <ToolButton aria-label="Virtual hosting"><CloudIcon /></ToolButton>
          <ToolButton aria-label="Signals"><SignalIcon /></ToolButton>
          <ToolButton $size="label"><AutoTradingIcon />AutoTrading</ToolButton>
        </ToolGroup>
        <ToolGroup $tight>
          <Grip />
          <ToolButton aria-label="Bar chart"><BarChartIcon /></ToolButton>
          <ToolButton aria-label="Candlesticks" $pressed><CandleChartIcon /></ToolButton>
          <ToolButton aria-label="Line chart"><LineChartIcon /></ToolButton>
          <Divider />
          <ToolButton aria-label="Zoom in"><ZoomIcon plus /></ToolButton>
          <ToolButton aria-label="Zoom out"><ZoomIcon /></ToolButton>
          <ToolButton aria-label="Tile windows"><TileIcon /></ToolButton>
          <Divider $gap={3} />
          <ToolButton aria-label="Auto scroll" $pressed><AutoScrollIcon /></ToolButton>
          <ToolButton aria-label="Chart shift" $pressed><ShiftIcon /></ToolButton>
          <Divider $gap={4} />
          <ToolButton $size="split" aria-label="Indicators"><IndicatorIcon /><Caret /></ToolButton>
          <ToolButton $size="split" aria-label="Periods"><ClockIcon /><Caret /></ToolButton>
          <ToolButton $size="tail" aria-label="Templates"><TemplateIcon /><Caret /></ToolButton>
        </ToolGroup>
      </ToolRow>
      <ToolRow>
        <ToolGroup $tight>
          <Grip />
          <ToolButton $size="slim" aria-label="Cursor" $pressed><CursorIcon /></ToolButton>
          <ToolButton aria-label="Crosshair"><CrossIcon /></ToolButton>
          <Divider />
          <ToolButton aria-label="Vertical line"><VLineIcon /></ToolButton>
          <Divider $gap={4} />
          <ToolButton aria-label="Horizontal line"><HLineIcon /></ToolButton>
          <ToolButton aria-label="Trendline"><TrendIcon /></ToolButton>
          <ToolButton aria-label="Equidistant channel"><ChannelIcon /></ToolButton>
          <ToolButton aria-label="Fibonacci retracement"><FiboIcon /></ToolButton>
          <ToolButton aria-label="Text"><TextIcon /></ToolButton>
          <ToolButton aria-label="Text label"><LabelIcon /></ToolButton>
          <ToolButton $size="tail" aria-label="Arrows"><ArrowsIcon /><Caret /></ToolButton>
        </ToolGroup>
        <ToolGroup $tight>
          <Grip />
          {periods.map((label) => <PeriodButton key={label} $pressed={label === "M15"}>{label}</PeriodButton>)}
        </ToolGroup>
      </ToolRow>
      <Desktop>
        <LeftColumn>
          <ChartWindow
            active
            symbol="XAUUSD+,M15"
            prices="1475.21 1475.90 1475.19 1475.34"
            data={m15}
            plotHeight={367}
            titleHeight={22}
            drop={0}
            countdown={{ top: 66, right: 8 }}
            scale={{ labels: m15Prices, first: 17, gap: 31.45, current: 93 }}
          >
            <TimeLabels height={18} marks={[[0, "13 Dec 2019"], [61, "13 Dec 08:15"], [122, "13 Dec 12:15"], [183, "13 Dec 16:15"], [244, "13 Dec 20:15"]]} />
          </ChartWindow>
          <ChartWindow
            fill
            left={8}
            symbol="XAUUSD+,M30"
            prices="1475.56 1475.90 1475.18 1475.34"
            data={m30}
            plotHeight={400}
            titleHeight={28}
            drop={4}
            countdown={{ top: 155, right: 8 }}
            scale={{ labels: m30Prices, first: 26, gap: 31.4, current: 177, width: 41 }}
          />
        </LeftColumn>
        <Column>
          <ChartWindow
            fill
            symbol="XAUUSD+,H1"
            prices="1476.54 1476.54 1475.18 1475.34"
            data={h1}
            plotHeight={800}
            titleHeight={30}
            drop={6}
            countdown={{ top: 421, right: 37 }}
            scale={{ labels: h1Prices, first: 2, gap: 31.4, current: 452, heavyFrom: 352 }}
          />
        </Column>
        <Column>
          <ChartWindow
            open
            left={0}
            symbol="XAUUSD+,H4"
            prices="1476.79 1478.07 1474.57 1475.34"
            data={h4}
            plotHeight={359}
            titleHeight={31}
            drop={6}
          >
            <TimeArea>
              <TimeLabels height={19} marks={[[97, ":00"], [123, "4 Dec 21:00"], [184, "9 Dec 13:00"]]} />
              <PeriodTag>period</PeriodTag>
            </TimeArea>
          </ChartWindow>
          <ChartWindow
            fill
            open
            left={4}
            symbol="XAUUSD+,Weekly"
            prices="1459.58 1486.73 1458.75 1475.34"
            data={weekly}
            plotHeight={400}
            titleHeight={30}
            drop={6}
          />
        </Column>
      </Desktop>
    </Shell>
  );
}
